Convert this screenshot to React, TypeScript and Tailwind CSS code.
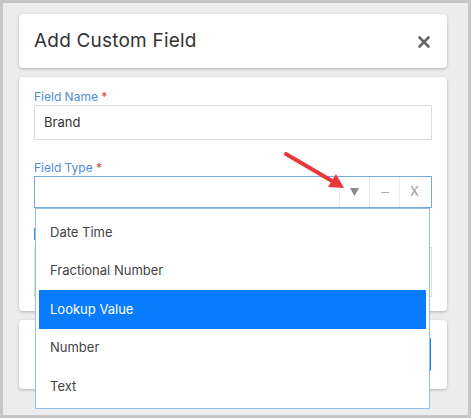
import { useState } from 'react';

const fieldTypes = ['Date Time', 'Fractional Number', 'Lookup Value', 'Number', 'Text'];

function Label({ text }: { text: string }) {
  return (
    <div className="h-4 text-[12px] leading-4 text-[#4a8fd8]">
      {text} <span className="text-[#e5413b]">*</span>
    </div>
  );
}

export default function App() {
  const [selected] = useState('Lookup Value');

  return (
    <div className="w-[474px] h-[420px] bg-white" style={{ fontFamily: 'Inter, "Noto Sans", sans-serif' }}>
      <div className="relative w-[471px] h-[418px] border-[3px] border-[#c6c6c6] bg-[#ececec] pl-4 pt-[11px]">
        {/* dialog header */}
        <div className="w-[428px] h-[54px] bg-white rounded-[4px] shadow-[0_1px_3px_rgba(0,0,0,0.25)] flex items-center justify-between pl-[15px] pr-[17px]">
          <h1 className="text-[19px] text-[#333] tracking-[0.2px]">Add Custom Field</h1>
          <svg width="12" height="12" viewBox="0 0 12 12" className="mt-[1px]">
            <path d="M1.5 1.5 L10.5 10.5 M10.5 1.5 L1.5 10.5" stroke="#666" strokeWidth="2.6" strokeLinecap="round" />
          </svg>
        </div>

        {/* form fields */}
        <div className="mt-[9px] w-[428px] h-[234px] bg-white rounded-[4px] shadow-[0_1px_3px_rgba(0,0,0,0.25)] px-[15px] pt-3">
          <Label text="Field Name" />
          <div className="h-[35px] border border-[#dcdcdc] flex items-center pl-[9px] text-[13px] text-[#333]">
            Brand
          </div>

          <div className="mt-5">
            <Label text="Field Type" />
          </div>
          <div className="relative h-[32px] border border-[#74aadf] flex justify-end pr-[2px]">
            <div className="w-[30px] border-l border-[#ececec] flex items-center justify-center">
              <svg width="9" height="8" viewBox="0 0 9 8">
                <path d="M0 0 H9 L4.5 8 Z" fill="#8a8a8a" />
              </svg>
            </div>
            <div className="w-[30px] border-l border-[#ececec] flex items-center justify-center">
              <div className="w-[8px] h-[1px] bg-[#aaa]" />
            </div>
            <div className="w-[30px] border-l border-[#ececec] flex items-center justify-center text-[13px] text-[#999]">
              X
            </div>

            {/* open option list */}
            <div className="absolute z-10 left-0 right-[1px] top-[31px] h-[201px] bg-white border border-[#94c0ea] px-[3px] pt-[4px]">
              {fieldTypes.map((t) => (
                <div
                  key={t}
                  className={
                    t === selected
                      ? 'h-[38.5px] flex items-center pl-[11px] text-[13px] bg-[#087cfd] text-white'
                      : 'h-[38.5px] flex items-center pl-[11px] text-[13px] text-[#444]'
                  }
                >
                  {t}
                </div>
              ))}
            </div>
          </div>

          {/* next field, covered by the open list */}
          <div className="mt-[20px] h-[12px] w-[2px] bg-[#4a8fd8]" />
          <div className="mt-[7px] h-[50px] border border-[#dcdcdc]" />
        </div>

        {/* footer */}
        <div className="mt-[9px] w-[428px] h-[69px] bg-white rounded-[4px] shadow-[0_1px_3px_rgba(0,0,0,0.25)] flex justify-end items-start pt-[17px] pr-4">
          <div className="w-[110px] h-[35px] border-2 border-[#1a7fe8] rounded-[3px]" />
        </div>

        {/* annotation arrow */}
        <svg className="absolute z-20 left-0 top-0 pointer-events-none" width="471" height="418" viewBox="3 3 471 418">
          <line x1="286" y1="154" x2="332" y2="181" stroke="#e8393a" strokeWidth="4" strokeLinecap="round" />
          <polygon points="344,188 328,187 336,174" fill="#e8393a" />
        </svg>
      </div>
    </div>
  );
}
